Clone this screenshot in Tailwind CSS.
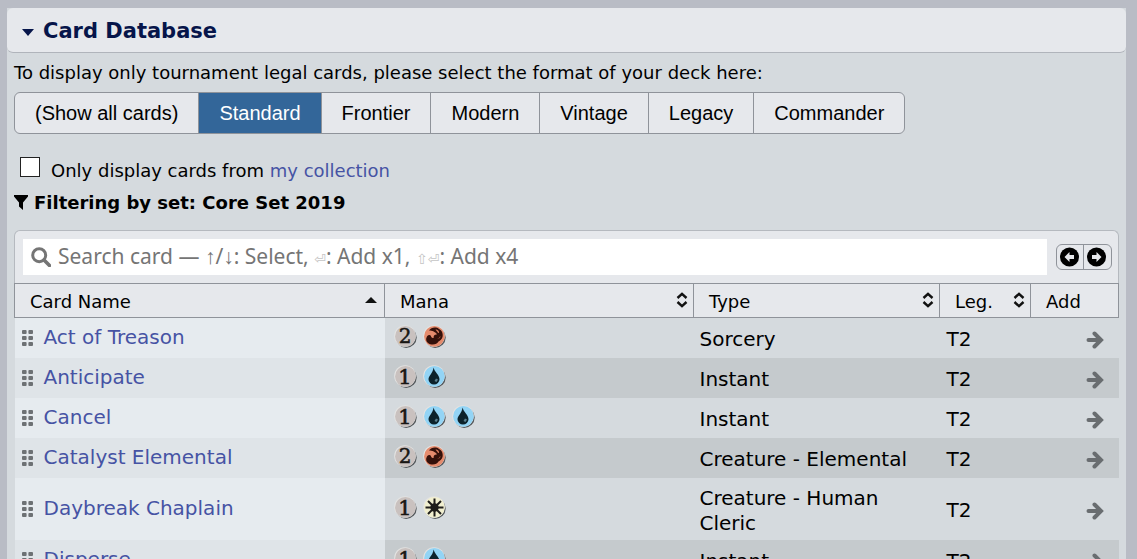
<!DOCTYPE html>
<html lang="en">
<head>
    <meta charset="UTF-8">
    <meta name="viewport" content="width=device-width, initial-scale=1.0">
    <title>Card Database</title>
    <script src="https://cdn.jsdelivr.net/npm/@tailwindcss/browser@4"></script>
</head>
<body class="h-screen overflow-hidden bg-[#b9bcc5] pt-2 pl-[7px] pr-[11px] font-['DejaVu_Sans',sans-serif] text-black">

    <!-- Icons and mana symbols -->
    <svg class="hidden" aria-hidden="true">
        <symbol id="grip" viewBox="0 0 12 16">
            <g fill="#6d7174">
                <rect x="0" y="0" width="4.600" height="4" rx="1"/><rect x="6.400" y="0" width="4.600" height="4" rx="1"/>
                <rect x="0" y="6" width="4.600" height="4" rx="1"/><rect x="6.400" y="6" width="4.600" height="4" rx="1"/>
                <rect x="0" y="12" width="4.600" height="4" rx="1"/><rect x="6.400" y="12" width="4.600" height="4" rx="1"/>
            </g>
        </symbol>
        <symbol id="add" viewBox="0 0 18 18">
            <path d="M2.500 9H14M8.500 2.500L15 9l-6.500 6.500" fill="none" stroke="#696d70" stroke-width="4" stroke-linecap="round"/>
        </symbol>
        <symbol id="sort" viewBox="0 0 12 16">
            <path d="M1.500 6L6 1.800 10.500 6M1.500 10L6 14.200 10.500 10" fill="none" stroke="#111" stroke-width="2.400"/>
        </symbol>
        <symbol id="disc" viewBox="0 0 24 24">
            <circle cx="12.200" cy="12.400" r="10.500" fill="#55595c"/>
            <circle cx="11" cy="11" r="10.800" fill="#e3e3e2"/>
            <circle cx="11.400" cy="11.400" r="10.300" fill="currentColor"/>
        </symbol>
        <symbol id="mana-1" viewBox="0 0 24 24">
            <use href="#disc" color="#c9c1bf"/>
            <text x="11" y="18.500" text-anchor="middle" font-family="DejaVu Serif, serif" font-size="21" fill="#181614" stroke="#181614" stroke-width=".6">1</text>
        </symbol>
        <symbol id="mana-2" viewBox="0 0 24 24">
            <use href="#disc" color="#c9c1bf"/>
            <text x="11" y="18" text-anchor="middle" font-family="DejaVu Serif, serif" font-size="20" fill="#181614" stroke="#181614" stroke-width=".5">2</text>
        </symbol>
        <symbol id="mana-u" viewBox="0 0 24 24">
            <use href="#disc" color="#93d4f5"/>
            <path d="M10.500 2.500C11.500 7 16.500 10 16.500 14.200A5.500 5.300 0 0 1 5.500 14.200C5.500 10.500 10 8.500 10.500 2.500z" fill="#0c222b"/>
            <path d="M13 13.500l2 1-1.500 2.500-2-1z" fill="#5a808f"/>
        </symbol>
        <symbol id="mana-r" viewBox="0 0 24 24">
            <use href="#disc" color="#e58b6d"/>
            <path d="M6 5.500C8 2.500 13 1.500 16 4C18.500 5 20.500 8.500 19.500 12C19 14.500 17 15.500 15.500 16.500C14 20 8 20.500 5 18C3 16.500 2.500 13.500 4 11.500C5 10 7 9.500 8 11C8 12.500 9.500 13.500 11 12.500C10 11 11.500 9.500 14 9.500C13 7 9 5.500 6 5.500z" fill="#34100a"/>
            <path d="M12.500 4.500c2 0 4 1.500 3.500 3.500-1 .5-2-2-3.500-3.500zM14 13.500c2 0 3-1 3-2.500 1 1 0 3-3 2.500z" fill="#d47a5c"/>
        </symbol>
        <symbol id="mana-w" viewBox="0 0 24 24">
            <use href="#disc" color="#f1efcf"/>
            <circle cx="11.500" cy="11.500" r="4.200" fill="#1f1d1a"/>
            <path d="M11.500 2.500v18M2.500 11.500h18M5 5l13 13M18 5L5 18" stroke="#1f1d1a" stroke-width="2"/>
        </symbol>
    </svg>

    <section class="bg-[#d5dade]">
        <h1 class="flex h-[45px] items-center gap-[9px] rounded-md border-b border-[#b0b4bb] bg-[#e6e8ec] pt-1 pl-[15px] text-[21px] font-bold text-[#06154a]">
            <svg class="h-[7px] w-3" viewBox="0 0 12 7"><path d="M0 0h12L6 7z" fill="#06154a"/></svg>
            Card Database
        </h1>

        <div class="px-[7px]">
            <p class="pt-2 text-[18px] leading-6">To display only tournament legal cards, please select the format of your deck here:</p>

            <div class="mt-[7px] inline-flex h-[42px] divide-x divide-[#8f939a] overflow-hidden rounded-md border border-[#8f939a] bg-[#e6e8ec] font-['Liberation_Sans',Arial,sans-serif] text-[20px]">
                <button type="button" class="px-5">(Show all cards)</button>
                <button type="button" class="bg-[#336699] px-5 text-white">Standard</button>
                <button type="button" class="px-5">Frontier</button>
                <button type="button" class="px-5">Modern</button>
                <button type="button" class="px-5">Vintage</button>
                <button type="button" class="px-5">Legacy</button>
                <button type="button" class="px-5">Commander</button>
            </div>

            <div class="mt-4 flex h-9 items-center gap-[11px] pl-1.5 text-[18px]">
                <input type="checkbox" id="own" class="mb-0.5 size-5 appearance-none border border-[#222] bg-white">
                <label for="own" class="pt-1">Only display cards from <a href="#" class="text-[#4653a4]">my collection</a></label>
            </div>

            <p class="flex h-8 items-center gap-1.5 text-[18px] font-bold">
                <svg class="h-[15px] w-3.5" viewBox="0 0 14 15"><path d="M0 0h14v1.500L9 7.500V15L5 11.500v-4L0 1.500z"/></svg>
                Filtering by set: Core Set 2019
            </p>

            <div class="mt-3 flex h-[53px] items-center rounded-t-md border border-b-0 border-[#b5b9bf] bg-[#e6e8ec] pr-1.5 pl-2">
                <div class="relative flex h-9 flex-1 items-center gap-[7px] bg-white pl-2">
                    <svg class="size-5" viewBox="0 0 20 20" fill="none" stroke="#757575" stroke-width="3"><circle cx="8.200" cy="8.200" r="6.500"/><path d="M13 13l5.500 5.500" stroke-width="3.600" stroke-linecap="round"/></svg>
                    <input type="text" id="search" placeholder=" " class="peer h-full flex-1 font-['Noto_Sans',sans-serif] text-[21px] outline-none">
                    <!-- Hint lies over the empty box and goes away while typing -->
                    <label for="search" class="invisible absolute left-[35px] font-['Noto_Sans',sans-serif] text-[21px] whitespace-pre text-[#757575] peer-placeholder-shown:visible">Search card — <span class="font-['Liberation_Sans']">↑</span>/<span class="font-['Liberation_Sans']">↓</span>: Select, <span class="font-['DejaVu_Sans'] text-[14px] text-[#c4c4c4]">⏎</span>: Add x1, <span class="font-['DejaVu_Sans'] text-[14px] text-[#c4c4c4]">⇧⏎</span>: Add x4</label>
                </div>
                <div class="ml-[9px] flex h-[26px] divide-x divide-[#8f939a] rounded-md border border-[#8f939a]">
                    <button type="button" aria-label="Previous" class="flex w-[27px] items-center pl-[3px]">
                        <svg class="size-5" viewBox="0 0 20 20"><circle cx="9.500" cy="10" r="9.500"/><path d="M9.500 5v3h4.500v4H9.500v3L4.500 10z" fill="#e6e8ec"/></svg>
                    </button>
                    <button type="button" aria-label="Next" class="flex w-[27px] items-center pl-[3px]">
                        <svg class="size-5" viewBox="0 0 20 20"><circle cx="9.500" cy="10" r="9.500"/><path d="M9.500 5v3H5v4h4.500v3l5-5z" fill="#e6e8ec"/></svg>
                    </button>
                </div>
            </div>

            <table class="w-full table-fixed border-collapse text-[20px] leading-[25px]">
                <colgroup>
                    <col>
                    <col class="w-[309px]">
                    <col class="w-[246px]">
                    <col class="w-[91px]">
                    <col class="w-[88px]">
                </colgroup>
                <thead>
                    <tr class="h-[34px] bg-[#e6e8ec] text-left text-[18px]">
                        <th class="border border-[#8f939a] pt-0.5 pr-[7px] pl-[15px] font-normal">
                            <div class="flex items-center justify-between">Card Name <svg class="mb-1 h-1.5 w-3" viewBox="0 0 12 6"><path d="M6 0l6 6H0z" fill="#111"/></svg></div>
                        </th>
                        <th class="border border-[#8f939a] pt-0.5 pr-[5px] pl-[15px] font-normal">
                            <div class="flex items-center justify-between">Mana <svg class="mb-1 h-4 w-3"><use href="#sort"/></svg></div>
                        </th>
                        <th class="border border-[#8f939a] pt-0.5 pr-[5px] pl-[15px] font-normal">
                            <div class="flex items-center justify-between">Type <svg class="mb-1 h-4 w-3"><use href="#sort"/></svg></div>
                        </th>
                        <th class="border border-[#8f939a] pt-0.5 pr-[5px] pl-[15px] font-normal">
                            <div class="flex items-center justify-between">Leg. <svg class="mb-1 h-4 w-3"><use href="#sort"/></svg></div>
                        </th>
                        <th class="border border-[#8f939a] pt-0.5 pl-[15px] font-normal">Add</th>
                    </tr>
                </thead>
                <tbody>
                    <tr class="h-10">
                        <td class="bg-[#e6ebef] px-[7px]"><div class="flex items-center gap-2.5"><svg class="h-4 w-3"><use href="#grip"/></svg><a href="#" class="text-[#4653a4]">Act of Treason</a></div></td>
                        <td class="px-[9px] pb-0.5"><div class="flex gap-[5px]"><svg class="size-6"><use href="#mana-2"/></svg><svg class="size-6"><use href="#mana-r"/></svg></div></td>
                        <td class="px-1.5 pt-2 pb-1">Sorcery</td>
                        <td class="px-[7px] pt-2 pb-1">T2</td>
                        <td class="pt-1 pr-[15px]"><button type="button" aria-label="Add" class="ml-auto block"><svg class="size-[18px]"><use href="#add"/></svg></button></td>
                    </tr>
                    <tr class="h-10 bg-[#c5cacd]">
                        <td class="bg-[#dfe4e8] px-[7px]"><div class="flex items-center gap-2.5"><svg class="h-4 w-3"><use href="#grip"/></svg><a href="#" class="text-[#4653a4]">Anticipate</a></div></td>
                        <td class="px-[9px] pb-0.5"><div class="flex gap-[5px]"><svg class="size-6"><use href="#mana-1"/></svg><svg class="size-6"><use href="#mana-u"/></svg></div></td>
                        <td class="px-1.5 pt-2 pb-1">Instant</td>
                        <td class="px-[7px] pt-2 pb-1">T2</td>
                        <td class="pt-1 pr-[15px]"><button type="button" aria-label="Add" class="ml-auto block"><svg class="size-[18px]"><use href="#add"/></svg></button></td>
                    </tr>
                    <tr class="h-10">
                        <td class="bg-[#e6ebef] px-[7px]"><div class="flex items-center gap-2.5"><svg class="h-4 w-3"><use href="#grip"/></svg><a href="#" class="text-[#4653a4]">Cancel</a></div></td>
                        <td class="px-[9px] pb-0.5"><div class="flex gap-[5px]"><svg class="size-6"><use href="#mana-1"/></svg><svg class="size-6"><use href="#mana-u"/></svg><svg class="size-6"><use href="#mana-u"/></svg></div></td>
                        <td class="px-1.5 pt-2 pb-1">Instant</td>
                        <td class="px-[7px] pt-2 pb-1">T2</td>
                        <td class="pt-1 pr-[15px]"><button type="button" aria-label="Add" class="ml-auto block"><svg class="size-[18px]"><use href="#add"/></svg></button></td>
                    </tr>
                    <tr class="h-10 bg-[#c5cacd]">
                        <td class="bg-[#dfe4e8] px-[7px]"><div class="flex items-center gap-2.5"><svg class="h-4 w-3"><use href="#grip"/></svg><a href="#" class="text-[#4653a4]">Catalyst Elemental</a></div></td>
                        <td class="px-[9px] pb-0.5"><div class="flex gap-[5px]"><svg class="size-6"><use href="#mana-2"/></svg><svg class="size-6"><use href="#mana-r"/></svg></div></td>
                        <td class="px-1.5 pt-2 pb-1">Creature - Elemental</td>
                        <td class="px-[7px] pt-2 pb-1">T2</td>
                        <td class="pt-1 pr-[15px]"><button type="button" aria-label="Add" class="ml-auto block"><svg class="size-[18px]"><use href="#add"/></svg></button></td>
                    </tr>
                    <tr class="h-10">
                        <td class="bg-[#e6ebef] px-[7px]"><div class="flex items-center gap-2.5"><svg class="h-4 w-3"><use href="#grip"/></svg><a href="#" class="text-[#4653a4]">Daybreak Chaplain</a></div></td>
                        <td class="px-[9px] pb-0.5"><div class="flex gap-[5px]"><svg class="size-6"><use href="#mana-1"/></svg><svg class="size-6"><use href="#mana-w"/></svg></div></td>
                        <td class="px-1.5 pt-2 pb-1">Creature - Human Cleric</td>
                        <td class="px-[7px] pt-2 pb-1">T2</td>
                        <td class="pt-1 pr-[15px]"><button type="button" aria-label="Add" class="ml-auto block"><svg class="size-[18px]"><use href="#add"/></svg></button></td>
                    </tr>
                    <tr class="h-10 bg-[#c5cacd]">
                        <td class="bg-[#dfe4e8] px-[7px]"><div class="flex items-center gap-2.5"><svg class="h-4 w-3"><use href="#grip"/></svg><a href="#" class="text-[#4653a4]">Disperse</a></div></td>
                        <td class="px-[9px] pb-0.5"><div class="flex gap-[5px]"><svg class="size-6"><use href="#mana-1"/></svg><svg class="size-6"><use href="#mana-u"/></svg></div></td>
                        <td class="px-1.5 pt-2 pb-1">Instant</td>
                        <td class="px-[7px] pt-2 pb-1">T2</td>
                        <td class="pt-1 pr-[15px]"><button type="button" aria-label="Add" class="ml-auto block"><svg class="size-[18px]"><use href="#add"/></svg></button></td>
                    </tr>
                </tbody>
            </table>
        </div>
    </section>

</body>
</html>
